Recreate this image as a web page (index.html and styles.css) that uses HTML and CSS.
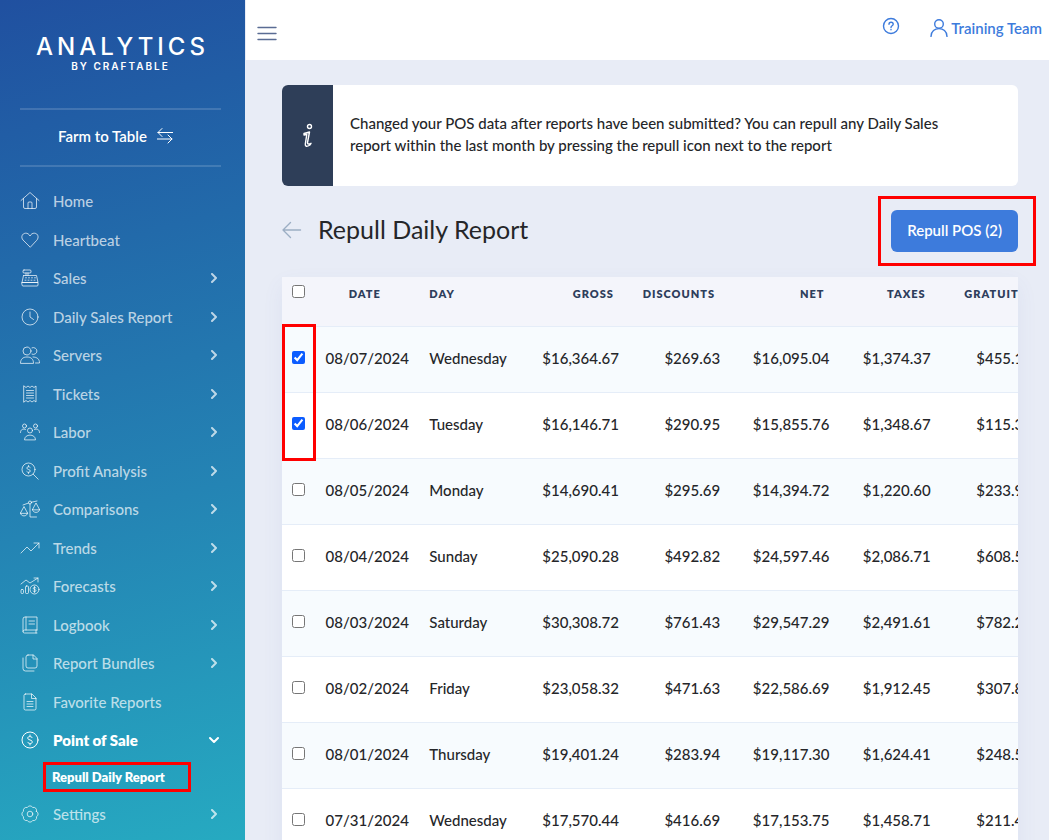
FILE: index.html
```html
<!DOCTYPE html>
<html lang="en">
<head>
    <meta charset="UTF-8">
    <meta name="viewport" content="width=device-width, initial-scale=1.0">
    <title>Repull Daily Report</title>
    <link rel="stylesheet" href="styles.css">
</head>
<body>
<div class="app">
    <aside class="sidebar">
        <div class="logo">
            <span class="logo-name">ANALYTICS</span>
            <span class="logo-by">BY CRAFTABLE</span>
        </div>
        <button type="button" class="location">
            Farm to Table
            <svg class="swap" viewBox="0 0 16 16"><path d="M16 4.500H1M5 .5l-4 4 4 4M0 11h15M11 7l4 4-4 4"/></svg>
        </button>
        <nav>
            <ul class="menu">
                <li><a href="#" class="menu-link">
                    <svg class="icon" viewBox="0 0 20 20"><path d="M1 9.500 10 1.500l9 8M3.500 7.500v8.500a1.500 1.500 0 0 0 1.500 1.500h10a1.500 1.500 0 0 0 1.500-1.500V7.500M8 17.500v-5.500a1 1 0 0 1 1-1h2a1 1 0 0 1 1 1v5.500"/></svg>
                    Home</a></li>
                <li><a href="#" class="menu-link">
                    <svg class="icon" viewBox="0 0 20 20"><path d="M10 17 3 10C.8 7.500 1.800 3.500 5.500 3.200 7.500 3 9 4.200 10 6c1-1.800 2.500-3 4.500-2.800 3.700.3 4.700 4.300 2.500 6.800z"/></svg>
                    Heartbeat</a></li>
                <li><a href="#" class="menu-link">
                    <svg class="icon" viewBox="0 0 20 20"><rect x="3" y="2" width="8" height="3" rx="1"/><path d="M6 5v2.500M8 5v2.500M4 7.500h12.500l1.500 7H2l1.500-7zM2 14.500h16V17a1 1 0 0 1-1 1H3a1 1 0 0 1-1-1z"/><path class="dots" d="M5.500 9.800h10M5 12.200h11"/></svg>
                    Sales<svg class="chevron" viewBox="0 0 10 10"><path d="m3 1 4 4-4 4"/></svg></a></li>
                <li><a href="#" class="menu-link">
                    <svg class="icon" viewBox="0 0 20 20"><circle cx="10" cy="10" r="8"/><path d="M10 5v5l3.500 2.500"/></svg>
                    Daily Sales Report<svg class="chevron" viewBox="0 0 10 10"><path d="m3 1 4 4-4 4"/></svg></a></li>
                <li><a href="#" class="menu-link">
                    <svg class="icon" viewBox="0 0 20 20"><circle cx="7" cy="6" r="4"/><path d="M.5 18c0-4 2.500-6 6.500-6s6.500 2 6.500 6zM12 2.800a3.500 3.500 0 1 1 0 6.400M13 12c4 0 6.500 2 6.500 6h-4"/></svg>
                    Servers<svg class="chevron" viewBox="0 0 10 10"><path d="m3 1 4 4-4 4"/></svg></a></li>
                <li><a href="#" class="menu-link">
                    <svg class="icon" viewBox="0 0 20 20"><path d="M4 2l2 1.500L8 2l2 1.500L12 2l2 1.500L16 2v16l-2-1.500-2 1.500-2-1.500L8 18l-2-1.500L4 18zM6.500 6.500h7M6.500 9h7M6.500 11.500h7M6.500 14h7"/></svg>
                    Tickets<svg class="chevron" viewBox="0 0 10 10"><path d="m3 1 4 4-4 4"/></svg></a></li>
                <li><a href="#" class="menu-link">
                    <svg class="icon" viewBox="0 0 20 20"><circle cx="4.500" cy="4" r="2"/><circle cx="15.500" cy="4" r="2"/><circle cx="10" cy="8.500" r="2.500"/><path d="M.5 10.500c0-3.500 3-4 5-3M19.500 10.500c0-3.500-3-4-5-3M4.500 17.500c0-6 11-6 11 0z"/></svg>
                    Labor<svg class="chevron" viewBox="0 0 10 10"><path d="m3 1 4 4-4 4"/></svg></a></li>
                <li><a href="#" class="menu-link">
                    <svg class="icon" viewBox="0 0 20 20"><circle cx="8.500" cy="8.500" r="6.500"/><path d="m13.200 13.200 5 5M10.300 6.500C9.500 5.300 6.800 5.500 6.800 7c0 2 3.500 1 3.500 3 0 1.700-2.800 1.800-3.600.5M8.500 4.500v1M8.500 11.500v1"/></svg>
                    Profit Analysis<svg class="chevron" viewBox="0 0 10 10"><path d="m3 1 4 4-4 4"/></svg></a></li>
                <li><a href="#" class="menu-link">
                    <svg class="icon" viewBox="0 0 20 20"><circle cx="10" cy="3.500" r="1.500"/><path d="M10 5v13h6.500M8.500 4 3 6M11.500 3.200 17 2M.5 14 4 7.500 7.500 14zM.5 14c0 4 7 4 7 0M12.500 10.500 16 4l3.500 6.500zM12.500 10.500c0 4 7 4 7 0"/></svg>
                    Comparisons<svg class="chevron" viewBox="0 0 10 10"><path d="m3 1 4 4-4 4"/></svg></a></li>
                <li><a href="#" class="menu-link">
                    <svg class="icon" viewBox="0 0 20 20"><path d="m1 15 6-6 4 4 8-8M14 5h5v5"/></svg>
                    Trends<svg class="chevron" viewBox="0 0 10 10"><path d="m3 1 4 4-4 4"/></svg></a></li>
                <li><a href="#" class="menu-link">
                    <svg class="icon" viewBox="0 0 20 20"><path d="m1 8 5-4 4 3 8-5M14 2h4v4"/><rect x="1" y="13.500" width="2.500" height="4" rx="1"/><rect x="5.500" y="10" width="3" height="7.500" rx="1"/><circle cx="14.500" cy="13.500" r="4.500"/><path d="M16 12c-.7-1-2.800-.8-2.800.3 0 1.500 2.800.8 2.800 2.300 0 1.200-2.200 1.300-3 .3M14.500 10.500v6"/></svg>
                    Forecasts<svg class="chevron" viewBox="0 0 10 10"><path d="m3 1 4 4-4 4"/></svg></a></li>
                <li><a href="#" class="menu-link">
                    <svg class="icon" viewBox="0 0 20 20"><path d="M17 15V2H5a2 2 0 0 0-2 2v12.500A1.500 1.500 0 0 0 4.500 18H17M17 15H4.500a1.500 1.500 0 0 0-1.500 1.500M16 15v3M6 2v13M9 6h5.500M9 9h5.500"/></svg>
                    Logbook<svg class="chevron" viewBox="0 0 10 10"><path d="m3 1 4 4-4 4"/></svg></a></li>
                <li><a href="#" class="menu-link">
                    <svg class="icon" viewBox="0 0 20 20"><path d="M8 2h5.500L17 5.500V13a2 2 0 0 1-2 2H8a2 2 0 0 1-2-2V4a2 2 0 0 1 2-2zM13 2v4h4M3 5v10.500A2.500 2.500 0 0 0 5.500 18H14"/></svg>
                    Report Bundles<svg class="chevron" viewBox="0 0 10 10"><path d="m3 1 4 4-4 4"/></svg></a></li>
                <li><a href="#" class="menu-link">
                    <svg class="icon" viewBox="0 0 20 20"><path d="M5.500 2H12l4 4v10.500a1.500 1.500 0 0 1-1.500 1.500h-9A1.500 1.500 0 0 1 4 16.500v-13A1.500 1.500 0 0 1 5.500 2zM11.500 2v4.500H16M7 9.500h6M7 12h6M7 14.500h6"/></svg>
                    Favorite Reports</a></li>
                <li><a href="#" class="menu-link active">
                    <svg class="icon" viewBox="0 0 20 20"><circle cx="10" cy="10" r="8"/><path d="M12.300 7.700c-.9-1.700-4.600-1.500-4.600.4 0 2.400 4.600 1.300 4.600 3.800 0 2.100-3.700 2.200-4.600.4M10 5v1.200M10 13.800V15"/></svg>
                    Point of Sale<svg class="chevron" viewBox="0 0 10 10"><path d="m1 3 4 4 4-4"/></svg></a>
                    <a href="#" class="submenu-link">Repull Daily Report</a></li>
                <li><a href="#" class="menu-link">
                    <svg class="icon" viewBox="0 0 20 20"><circle cx="10" cy="10" r="2.800"/><path d="M16.470 7.320a3 3 0 0 1 0 5.360 3 3 0 0 1-3.790 3.790 3 3 0 0 1-5.360 0 3 3 0 0 1-3.790-3.790 3 3 0 0 1 0-5.360 3 3 0 0 1 3.790-3.790 3 3 0 0 1 5.360 0 3 3 0 0 1 3.790 3.790z"/></svg>
                    Settings<svg class="chevron" viewBox="0 0 10 10"><path d="m3 1 4 4-4 4"/></svg></a></li>
            </ul>
        </nav>
    </aside>

    <div class="page">
        <header class="topbar">
            <button type="button" class="plain" aria-label="Toggle menu">
                <svg class="burger" viewBox="0 0 20 16"><path d="M1 1.500h18M1 7.500h18M1 13.500h18"/></svg>
            </button>
            <div class="account">
                <a href="#" class="help" aria-label="Help">
                    <svg viewBox="0 0 18 18"><circle cx="9" cy="9" r="7.500"/><path d="M7 7.200c0-2.600 4.200-2.600 4.200 0C11.200 8.800 9 8.700 9 10.500M9 12.500v.3"/></svg>
                </a>
                <a href="#" class="user">
                    <svg viewBox="0 0 18 18"><circle cx="9" cy="5" r="4.300"/><path d="M1 17.500c0-10.500 16-10.500 16 0"/></svg>
                    <span>Training Team</span>
                </a>
            </div>
        </header>

        <main class="content">
            <div class="notice">
                <div class="notice-icon">
                    <svg viewBox="0 0 12 26"><circle cx="7.500" cy="3.500" r="2"/><path d="M2 10.500 7.500 9 5.500 19.500q-.3 2.500 3.500.8L8 22q-5 3-4.700-1l1.500-9.500L2 12z"/></svg>
                </div>
                <p class="notice-text">Changed your POS data after reports have been submitted? You can repull any Daily Sales report within the last month by pressing the repull icon next to the report</p>
            </div>

            <div class="heading">
                <a href="#" class="back" aria-label="Back">
                    <svg viewBox="0 0 20 18"><path d="M18.500 9H1M8.500 1.500 1 9l7.500 7.500"/></svg>
                </a>
                <h1>Repull Daily Report</h1>
                <div class="repull">
                    <button type="button" class="repull-button">Repull POS (2)</button>
                </div>
            </div>

            <div class="table-card">
                <div class="table-scroll">
                    <table class="report">
                        <colgroup>
                            <col class="col-check"><col class="col-date"><col class="col-amount"><col class="col-gross"><col class="col-amount"><col class="col-gross"><col class="col-amount"><col class="col-amount">
                        </colgroup>
                        <thead>
                        <tr>
                            <th><input type="checkbox" aria-label="Select all"></th>
                            <th class="date">Date</th>
                            <th class="day">Day</th>
                            <th>Gross</th>
                            <th>Discounts</th>
                            <th>Net</th>
                            <th>Taxes</th>
                            <th>Gratuity</th>
                        </tr>
                        </thead>
                        <tbody>
                        <tr><td><input type="checkbox" aria-label="08/07/2024" checked></td><td class="date">08/07/2024</td><td class="day">Wednesday</td><td>$16,364.67</td><td>$269.63</td><td>$16,095.04</td><td>$1,374.37</td><td>$455.15</td></tr>
                        <tr><td><input type="checkbox" aria-label="08/06/2024" checked></td><td class="date">08/06/2024</td><td class="day">Tuesday</td><td>$16,146.71</td><td>$290.95</td><td>$15,855.76</td><td>$1,348.67</td><td>$115.35</td></tr>
                        <tr><td><input type="checkbox" aria-label="08/05/2024"></td><td class="date">08/05/2024</td><td class="day">Monday</td><td>$14,690.41</td><td>$295.69</td><td>$14,394.72</td><td>$1,220.60</td><td>$233.95</td></tr>
                        <tr><td><input type="checkbox" aria-label="08/04/2024"></td><td class="date">08/04/2024</td><td class="day">Sunday</td><td>$25,090.28</td><td>$492.82</td><td>$24,597.46</td><td>$2,086.71</td><td>$608.50</td></tr>
                        <tr><td><input type="checkbox" aria-label="08/03/2024"></td><td class="date">08/03/2024</td><td class="day">Saturday</td><td>$30,308.72</td><td>$761.43</td><td>$29,547.29</td><td>$2,491.61</td><td>$782.25</td></tr>
                        <tr><td><input type="checkbox" aria-label="08/02/2024"></td><td class="date">08/02/2024</td><td class="day">Friday</td><td>$23,058.32</td><td>$471.63</td><td>$22,586.69</td><td>$1,912.45</td><td>$307.80</td></tr>
                        <tr><td><input type="checkbox" aria-label="08/01/2024"></td><td class="date">08/01/2024</td><td class="day">Thursday</td><td>$19,401.24</td><td>$283.94</td><td>$19,117.30</td><td>$1,624.41</td><td>$248.50</td></tr>
                        <tr><td><input type="checkbox" aria-label="07/31/2024"></td><td class="date">07/31/2024</td><td class="day">Wednesday</td><td>$17,570.44</td><td>$416.69</td><td>$17,153.75</td><td>$1,458.71</td><td>$211.40</td></tr>
                        </tbody>
                    </table>
                </div>
                <div class="marked-rows"></div>
            </div>
        </main>
    </div>
</div>
</body>
</html>
```
FILE: styles.css
```css
* {
    box-sizing: border-box;
}
html {
    scrollbar-width: none;
}
body {
    margin: 0;
    font-family: Lato, "Liberation Sans", sans-serif;
    font-size: 15px;
    line-height: 22px;
    color: #252629;
    background: #e8ecf6;
}
a {
    color: inherit;
    text-decoration: none;
}
button {
    font: inherit;
    cursor: pointer;
}
svg {
    display: block;
    flex: none;
    fill: none;
    stroke: currentColor;
    stroke-linecap: round;
    stroke-linejoin: round;
}
.app {
    display: flex;
    min-height: 100vh;
}

/* sidebar */
.sidebar {
    position: sticky;
    top: 0;
    flex: none;
    width: 245px;
    height: 100vh;
    padding: 0 24px 0 20px;
    overflow: hidden;
    color: #fff;
    background: linear-gradient(165deg, #2050a0, #2484b4 60%, #26aac1);
}
.logo {
    display: flex;
    flex-direction: column;
    align-items: center;
    height: 108px;
    padding-top: 33px;
}
.logo-name {
    font-family: Inter, sans-serif;
    font-size: 24px;
    font-weight: 500;
    line-height: 27px;
    letter-spacing: 4px;
    margin-right: -4px;
}
.logo-by {
    font-family: Inter, sans-serif;
    font-size: 10px;
    font-weight: 600;
    line-height: 12px;
    letter-spacing: 2px;
}
.location {
    display: flex;
    align-items: center;
    justify-content: center;
    gap: 10px;
    width: 100%;
    height: 59px;
    padding: 0 10px 4px 0;
    color: #fff;
    font-weight: 600;
    background: none;
    border: solid rgba(255, 255, 255, 0.15);
    border-width: 2px 0;
}
.swap {
    width: 16px;
    height: 16px;
}
.menu {
    margin: 15px 0 0;
    padding: 0;
    list-style: none;
    line-height: 1.5;
}
.menu-link {
    display: flex;
    align-items: center;
    padding: 8px 2px 8px 0;
    font-weight: 500;
    color: rgba(255, 255, 255, 0.7);
}
.icon {
    width: 20px;
    height: 20px;
    margin-right: 13px;
}
.dots {
    stroke-dasharray: 1 2;
}
.chevron {
    width: 10px;
    height: 10px;
    margin-left: auto;
    stroke-width: 2;
}
.menu-link.active {
    color: #fff;
    font-weight: 800;
}
.submenu-link {
    display: block;
    width: 148px;
    height: 30px;
    margin: 2px 0 3px 23px;
    padding-left: 6px;
    font-size: 13px;
    font-weight: 800;
    line-height: 24px;
    border: 3px solid #f00;
}

/* top bar */
.page {
    flex: 1;
    min-width: 0;
}
.topbar {
    display: flex;
    align-items: center;
    justify-content: space-between;
    height: 60px;
    margin-left: 1px;
    padding: 0 7px 0 11px;
    background: #fff;
}
.plain {
    padding: 8px 0 0;
    color: #5a6c94;
    background: none;
    border: 0;
}
.burger {
    width: 20px;
    height: 16px;
    stroke-width: 1.4;
}
.account {
    display: flex;
    align-items: center;
    gap: 30px;
    color: #3d7bdc;
}
.help svg,
.user svg {
    width: 18px;
    height: 18px;
    stroke-width: 1.4;
}
.help {
    padding-bottom: 8px;
}
.user {
    display: flex;
    align-items: center;
    gap: 3px;
    padding-bottom: 4px;
    font-weight: 600;
}

/* content */
.content {
    padding: 25px 31px 0 37px;
}
.notice {
    display: flex;
    overflow: hidden;
    background: #fff;
    border-radius: 6px;
}
.notice-icon {
    display: flex;
    flex: none;
    align-items: center;
    justify-content: center;
    width: 51px;
    color: #fff;
    background: #2e3e58;
}
.notice-icon svg {
    width: 12px;
    height: 26px;
    stroke-width: 1.4;
}
.notice-text {
    margin: 0;
    padding: 27px 50px 30px 17px;
    font-weight: 500;
}
.heading {
    display: flex;
    align-items: center;
    margin: 24px 0 25px;
}
.back {
    margin-right: 16px;
    padding-bottom: 2px;
    color: #9caec4;
}
.back svg {
    width: 20px;
    height: 18px;
    stroke-width: 1.4;
}
.heading h1 {
    margin: 0;
    padding-bottom: 4px;
    font-size: 25px;
    font-weight: 400;
    line-height: 36px;
}
.repull {
    position: relative;
    margin-left: auto;
}
.repull::after {
    content: "";
    position: absolute;
    inset: -14px -18px -14px -13px;
    border: 3px solid #f00;
    pointer-events: none;
}
.repull-button {
    display: block;
    height: 42px;
    padding: 0 16px 2px;
    color: #fff;
    font-weight: 600;
    background: #3d7bdc;
    border: 0;
    border-radius: 6px;
}

/* report table */
.table-card {
    position: relative;
    box-shadow: 0 8px 20px rgba(80, 100, 180, 0.07);
}
.table-scroll {
    overflow-x: auto;
    scrollbar-width: none;
}
.report {
    width: 761px;
    min-width: 100%;
    table-layout: fixed;
    border-collapse: separate;
    border-spacing: 0;
    background: #fff;
}
.col-check {
    width: 33px;
}
.col-date {
    width: 104px;
}
.col-amount {
    width: 101px;
}
.col-gross {
    width: 109px;
}
.report th,
.report td {
    padding: 0 11px 3px 10px;
    text-align: right;
    border-bottom: 1px solid #e5edf8;
}
.report th {
    height: 50px;
    padding: 6px 16px 0 0;
    font-size: 11px;
    font-weight: 800;
    letter-spacing: 1px;
    text-transform: uppercase;
    vertical-align: top;
    color: #2e3e5c;
    background: #f4f5fb;
}
.report td {
    height: 66px;
    font-weight: 500;
}
.report .date {
    padding-left: 0;
    padding-right: 0;
    text-align: center;
}
.report th.date {
    padding-right: 5px;
}
.report .day {
    text-align: left;
    padding-left: 10px;
}
.report tbody tr:nth-child(odd) {
    background: #f7fbfe;
}
.report th:first-child,
.report td:first-child {
    padding-left: 10px;
    padding-right: 0;
    text-align: left;
}
.report input {
    display: block;
    width: 13px;
    height: 13px;
    margin: 0 0 1px;
    accent-color: #0b5cff;
}
.report th input {
    margin-top: 2px;
}
.marked-rows {
    position: absolute;
    top: 47px;
    left: 0;
    width: 34px;
    height: 137px;
    border: 3px solid #f00;
    pointer-events: none;
}
```
